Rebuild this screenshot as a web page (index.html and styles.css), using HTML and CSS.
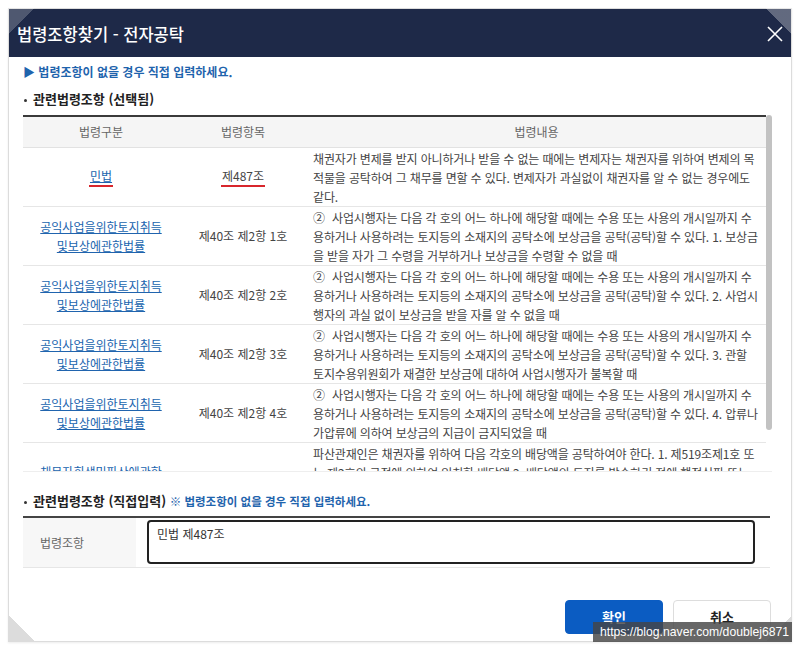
FILE: index.html
```html
<!DOCTYPE html>
<html lang="ko">
<head>
    <meta charset="UTF-8">
    <meta name="viewport" content="width=device-width, initial-scale=1.0">
    <title>법령조항찾기 - 전자공탁</title>
    <link rel="stylesheet" href="styles.css">
</head>
<body>
    <div class="dialog">
        <!-- Header -->
        <div class="dialog-head">
            <h1>법령조항찾기 - 전자공탁</h1>
            <button class="btn-close" type="button" aria-label="닫기">
                <svg width="16" height="16" viewBox="0 0 16 16">
                    <path d="M1 1 L15 15 M15 1 L1 15" stroke="#fff" stroke-width="1.6" fill="none"/>
                </svg>
            </button>
        </div>

        <div class="dialog-body">
            <p class="notice">▶ 법령조항이 없을 경우 직접 입력하세요.</p>

            <h2 class="sub-title">관련법령조항 (선택됨)</h2>
            <div class="law-scroll">
                <table class="law-table">
                    <colgroup>
                        <col class="col-kind">
                        <col class="col-item">
                        <col>
                    </colgroup>
                    <thead>
                        <tr>
                            <th>법령구분</th>
                            <th>법령항목</th>
                            <th>법령내용</th>
                        </tr>
                    </thead>
                    <tbody>
                        <tr>
                            <td class="center"><a href="#" class="mark">민법</a></td>
                            <td class="center"><span class="mark">제487조</span></td>
                            <td>채권자가 변제를 받지 아니하거나 받을 수 없는 때에는 변제자는 채권자를 위하여 변제의 목적물을 공탁하여 그 채무를 면할 수 있다. 변제자가 과실없이 채권자를 알 수 없는 경우에도 같다.</td>
                        </tr>
                        <tr>
                            <td class="center"><a href="#">공익사업을위한토지취득<br>및보상에관한법률</a></td>
                            <td class="center">제40조 제2항 1호</td>
                            <td><span class="clause-no">②</span>사업시행자는 다음 각 호의 어느 하나에 해당할 때에는 수용 또는 사용의 개시일까지 수용하거나 사용하려는 토지등의 소재지의 공탁소에 보상금을 공탁(공탁)할 수 있다. 1. 보상금을 받을 자가 그 수령을 거부하거나 보상금을 수령할 수 없을 때</td>
                        </tr>
                        <tr>
                            <td class="center"><a href="#">공익사업을위한토지취득<br>및보상에관한법률</a></td>
                            <td class="center">제40조 제2항 2호</td>
                            <td><span class="clause-no">②</span>사업시행자는 다음 각 호의 어느 하나에 해당할 때에는 수용 또는 사용의 개시일까지 수용하거나 사용하려는 토지등의 소재지의 공탁소에 보상금을 공탁(공탁)할 수 있다. 2. 사업시행자의 과실 없이 보상금을 받을 자를 알 수 없을 때</td>
                        </tr>
                        <tr>
                            <td class="center"><a href="#">공익사업을위한토지취득<br>및보상에관한법률</a></td>
                            <td class="center">제40조 제2항 3호</td>
                            <td><span class="clause-no">②</span>사업시행자는 다음 각 호의 어느 하나에 해당할 때에는 수용 또는 사용의 개시일까지 수용하거나 사용하려는 토지등의 소재지의 공탁소에 보상금을 공탁(공탁)할 수 있다. 3. 관할 토지수용위원회가 재결한 보상금에 대하여 사업시행자가 불복할 때</td>
                        </tr>
                        <tr>
                            <td class="center"><a href="#">공익사업을위한토지취득<br>및보상에관한법률</a></td>
                            <td class="center">제40조 제2항 4호</td>
                            <td><span class="clause-no">②</span>사업시행자는 다음 각 호의 어느 하나에 해당할 때에는 수용 또는 사용의 개시일까지 수용하거나 사용하려는 토지등의 소재지의 공탁소에 보상금을 공탁(공탁)할 수 있다. 4. 압류나 가압류에 의하여 보상금의 지급이 금지되었을 때</td>
                        </tr>
                        <tr>
                            <td class="center"><a href="#">채무자회생및파산에관한<br>법률</a></td>
                            <td class="center">제528조</td>
                            <td>파산관재인은 채권자를 위하여 다음 각호의 배당액을 공탁하여야 한다. 1. 제519조제1호 또는 제2호의 규정에 의하여 임치한 배당액 2. 배당액의 토지를 발송하기 전에 행정심판 또는 소송이 계속되어 있는 채권에 대한 배당액 3. 배당액의 통지를 발송한 후 채권자가 수령하지 아니한 배당액</td>
                        </tr>
                    </tbody>
                </table>
                <span class="scroll-thumb"></span>
            </div>

            <h2 class="sub-title sub-title-input">관련법령조항 (직접입력) <span class="sub-note">※ 법령조항이 없을 경우 직접 입력하세요.</span></h2>
            <table class="input-table">
                <tr>
                    <th>법령조항</th>
                    <td><textarea class="law-input">민법 제487조</textarea></td>
                </tr>
            </table>

            <div class="btn-area">
                <button class="btn btn-primary" type="button">확인</button>
                <button class="btn btn-default" type="button">취소</button>
            </div>
        </div>

        <!-- image frame corners -->
        <span class="corner corner-tl"></span>
        <span class="corner corner-tr"></span>
        <span class="corner corner-bl"></span>
        <span class="corner corner-br"></span>
    </div>

    <div class="watermark">https://blog.naver.com/doublej6871</div>
</body>
</html>
```

FILE: styles.css
```css
* {
    margin: 0;
    padding: 0;
    box-sizing: border-box;
}

body {
    padding: 8px;
    background: #fff;
    font-family: "Noto Sans CJK KR", sans-serif;
    font-size: 12px;
    color: #444;
    position: relative;
    width: 800px;
    height: 649px;
    overflow: hidden;
}

/* Dialog */
.dialog {
    position: relative;
    width: 784px;
    height: 634px;
    border: 1px solid #dcdcdc;
    box-shadow: 0 1px 2px rgba(0, 0, 0, 0.08);
    background: #fff;
}

.dialog-head {
    display: flex;
    align-items: center;
    justify-content: space-between;
    height: 48px;
    padding: 0 8px 0 8px;
    background: #1e2948;
}

.dialog-head h1 {
    font-size: 16.5px;
    font-weight: 500;
    color: #fff;
    line-height: 20px;
    margin-top: 1px;
}

.btn-close {
    display: flex;
    border: 0;
    background: none;
    margin-top: 1px;
}

.dialog-body {
    padding: 6px 19px 0 14px;
}

.notice {
    font-size: 12px;
    font-weight: 700;
    color: #1f64ad;
    line-height: 18px;
}

.sub-title {
    margin: 8px 0 6px;
    padding-left: 10px;
    position: relative;
    font-size: 13px;
    font-weight: 700;
    color: #222;
    line-height: 20px;
}

.sub-title::before {
    content: "";
    position: absolute;
    left: 1px;
    top: 10px;
    width: 3px;
    height: 3px;
    border-radius: 50%;
    background: #333;
}

.sub-title-input {
    margin: 19px 0 5px;
}

.sub-note {
    font-size: 11.5px;
    color: #1f64ad;
}

/* Selected law table */
.law-scroll {
    position: relative;
    height: 357px;
    overflow: hidden;
    border-bottom: 1px solid #eee;
}

.scroll-thumb {
    position: absolute;
    top: 0;
    right: 0;
    width: 6px;
    height: 315px;
    border-radius: 3px;
    background: #c2c2c2;
}

.law-table {
    width: 743px;
    border-collapse: collapse;
    table-layout: fixed;
    border-top: 2px solid #3a3a3a;
}

.col-kind { width: 156px; }
.col-item { width: 128px; }

.law-table th {
    height: 31px;
    background: #f5f5f5;
    font-weight: 400;
    color: #666;
    border-bottom: 1px solid #e2e2e2;
}

.law-table td {
    padding: 1px 6px 0 6px;
    line-height: 19px;
    letter-spacing: -0.15px;
    border-bottom: 1px solid #e6e6e6;
    vertical-align: middle;
    word-break: break-all;
}

.law-table td.center {
    text-align: center;
    padding: 0;
    letter-spacing: 0;
}

.law-table a {
    color: #2064ae;
    text-decoration: underline;
}

.clause-no {
    display: inline-block;
    width: 19px;
}

.mark {
    display: inline-block;
    line-height: 17px;
    padding: 0 1px 1px;
    border-bottom: 2px solid #d8262c;
}

/* Direct input */
.input-table {
    width: 747px;
    border-collapse: collapse;
    border-top: 2px solid #444;
    border-bottom: 1px solid #e6e6e6;
}

.input-table th {
    width: 113px;
    background: #f7f7f7;
    font-weight: 400;
    color: #666;
    text-align: left;
    padding-left: 17px;
}

.input-table td {
    padding: 2px 15px 3px 11px;
}

.law-input {
    display: block;
    width: 100%;
    height: 44px;
    border: 2px solid #222;
    border-radius: 4px;
    padding: 3px 8px;
    font-family: "Noto Sans CJK KR", sans-serif;
    font-size: 12px;
    line-height: 18px;
    color: #333;
    resize: none;
    outline: none;
}

/* Buttons */
.btn-area {
    display: flex;
    justify-content: flex-end;
    gap: 10px;
    margin-top: 32px;
    padding-right: 1px;
}

.btn {
    width: 98px;
    height: 34px;
    padding-bottom: 2px;
    border-radius: 4px;
    font-family: "Noto Sans CJK KR", sans-serif;
    font-size: 13px;
    font-weight: 700;
}

.btn-primary {
    background: #0b5cc2;
    border: 1px solid #0b5cc2;
    color: #fff;
}

.btn-default {
    background: #fff;
    border: 1px solid #ddd;
    color: #222;
}

/* Image frame corners */
.corner {
    position: absolute;
    width: 27px;
    height: 27px;
}

.corner-tl {
    top: -1px;
    left: -1px;
    background: linear-gradient(135deg, rgba(255, 255, 255, 0.22) 50%, transparent 50%);
}

.corner-tr {
    top: -1px;
    right: -1px;
    background: linear-gradient(225deg, rgba(255, 255, 255, 0.3) 50%, transparent 50%);
}

.corner-bl {
    bottom: -1px;
    left: -1px;
    background: linear-gradient(45deg, #dcdcdc 50%, transparent 50%);
}

.corner-br {
    bottom: -1px;
    right: -1px;
    background: linear-gradient(315deg, #dcdcdc 50%, transparent 50%);
}

.watermark {
    position: absolute;
    left: 593px;
    top: 622px;
    width: 199px;
    height: 20px;
    padding-left: 7px;
    background: rgba(70, 70, 70, 0.82);
    color: #fff;
    font-family: "Liberation Sans", sans-serif;
    font-size: 12.2px;
    line-height: 20px;
    white-space: nowrap;
}
```
